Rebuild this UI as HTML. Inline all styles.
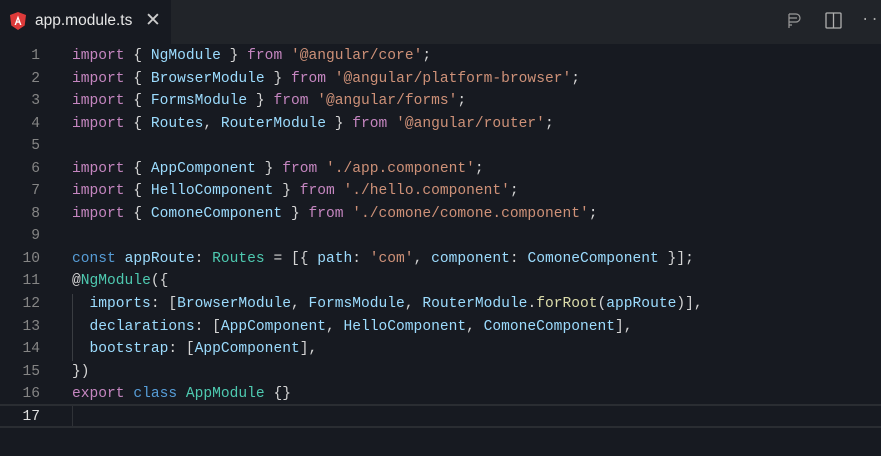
<!DOCTYPE html>
<html><head><style>
body{margin:0;width:881px;height:456px;background:#171a21;overflow:hidden;font-family:"Liberation Mono",monospace;}
.tabs{position:absolute;left:0;top:0;width:881px;height:44px;background:#212429;}
.tab{position:absolute;left:0;top:0;width:171px;height:44px;background:#171a21;font-family:"Liberation Sans",sans-serif;color:#e6e6e6;font-size:15.5px;}
.tab .t{position:absolute;left:35px;top:12px;}
.tab .x{position:absolute;left:145px;top:9px;font-size:19px;color:#ccc;}
.code{position:absolute;left:0;top:45px;font-size:14.6px;}
.l{position:relative;height:22.56px;line-height:22.56px;white-space:pre;color:#d4d4d4;}
.n{position:absolute;left:0;width:40px;text-align:right;color:#858585;}
.c{position:absolute;left:72px;}
.k{color:#c586c0}.v{color:#9cdcfe}.s{color:#ce9178}.b{color:#569cd6}.t2{color:#4ec9b0}.f{color:#dcdcaa}.d{color:#d4d4d4}
.cur{position:absolute;left:0;top:404px;width:881px;height:20px;border-top:2px solid #2a2d32;border-bottom:2px solid #2a2d32;}
.guide{position:absolute;left:72px;width:1px;background:#3a3d42;}
</style></head><body>
<div class="tabs">
<div class="tab">
<svg style="position:absolute;left:10px;top:12px" width="16" height="18" viewBox="0 0 16 18"><path d="M8 0L16 3l-1.3 10.5L8 18 1.3 13.5 0 3z" fill="#dd3a3a"/><path d="M8 3.5L4.5 13h1.5l.8-2.2h2.4l.8 2.2h1.5zM7.3 9.4L8 7.2l.7 2.2z" fill="#fff"/></svg>
<span class="t">app.module.ts</span><span class="x">✕</span></div>
<svg style="position:absolute;left:787px;top:12px" width="16" height="18" viewBox="0 0 16 18" fill="none" stroke="#9a9a9a" stroke-width="1.2"><path d="M2 2h7a4 4 0 0 1 0 8H5M2 2v14M2 6h8M2 10h3M2 13h3"/></svg>
<svg style="position:absolute;left:825px;top:12px" width="17" height="17" viewBox="0 0 17 17" fill="none" stroke="#b0b0b0" stroke-width="1.3"><rect x="1" y="1" width="15" height="15" rx="1"/><path d="M8.5 1v15"/></svg>
<span style="position:absolute;left:861px;top:12px;color:#aaa;font-size:14px;letter-spacing:1px">···</span>
</div>
<div class="cur"></div>
<div class="guide" style="top:294px;height:67px"></div>
<div class="guide" style="top:406px;height:20px;background:#2f3237"></div>
<div class="code">
<div class="l"><span class="n">1</span><span class="c"><span class="k">import</span> { <span class="v">NgModule</span> } <span class="k">from</span> <span class="s">'@angular/core'</span>;</span></div>
<div class="l"><span class="n">2</span><span class="c"><span class="k">import</span> { <span class="v">BrowserModule</span> } <span class="k">from</span> <span class="s">'@angular/platform-browser'</span>;</span></div>
<div class="l"><span class="n">3</span><span class="c"><span class="k">import</span> { <span class="v">FormsModule</span> } <span class="k">from</span> <span class="s">'@angular/forms'</span>;</span></div>
<div class="l"><span class="n">4</span><span class="c"><span class="k">import</span> { <span class="v">Routes</span>, <span class="v">RouterModule</span> } <span class="k">from</span> <span class="s">'@angular/router'</span>;</span></div>
<div class="l"><span class="n">5</span></div>
<div class="l"><span class="n">6</span><span class="c"><span class="k">import</span> { <span class="v">AppComponent</span> } <span class="k">from</span> <span class="s">'./app.component'</span>;</span></div>
<div class="l"><span class="n">7</span><span class="c"><span class="k">import</span> { <span class="v">HelloComponent</span> } <span class="k">from</span> <span class="s">'./hello.component'</span>;</span></div>
<div class="l"><span class="n">8</span><span class="c"><span class="k">import</span> { <span class="v">ComoneComponent</span> } <span class="k">from</span> <span class="s">'./comone/comone.component'</span>;</span></div>
<div class="l"><span class="n">9</span></div>
<div class="l"><span class="n">10</span><span class="c"><span class="b">const</span> <span class="v">appRoute</span>: <span class="t2">Routes</span> = [{ <span class="v">path</span>: <span class="s">'com'</span>, <span class="v">component</span>: <span class="v">ComoneComponent</span> }];</span></div>
<div class="l"><span class="n">11</span><span class="c">@<span class="t2">NgModule</span>({</span></div>
<div class="l"><span class="n">12</span><span class="c">  <span class="v">imports</span>: [<span class="v">BrowserModule</span>, <span class="v">FormsModule</span>, <span class="v">RouterModule</span>.<span class="f">forRoot</span>(<span class="v">appRoute</span>)],</span></div>
<div class="l"><span class="n">13</span><span class="c">  <span class="v">declarations</span>: [<span class="v">AppComponent</span>, <span class="v">HelloComponent</span>, <span class="v">ComoneComponent</span>],</span></div>
<div class="l"><span class="n">14</span><span class="c">  <span class="v">bootstrap</span>: [<span class="v">AppComponent</span>],</span></div>
<div class="l"><span class="n">15</span><span class="c">})</span></div>
<div class="l"><span class="n">16</span><span class="c"><span class="k">export</span> <span class="b">class</span> <span class="t2">AppModule</span> {}</span></div>
<div class="l"><span class="n" style="color:#e0e0e0">17</span></div>
</div>
</body></html>
